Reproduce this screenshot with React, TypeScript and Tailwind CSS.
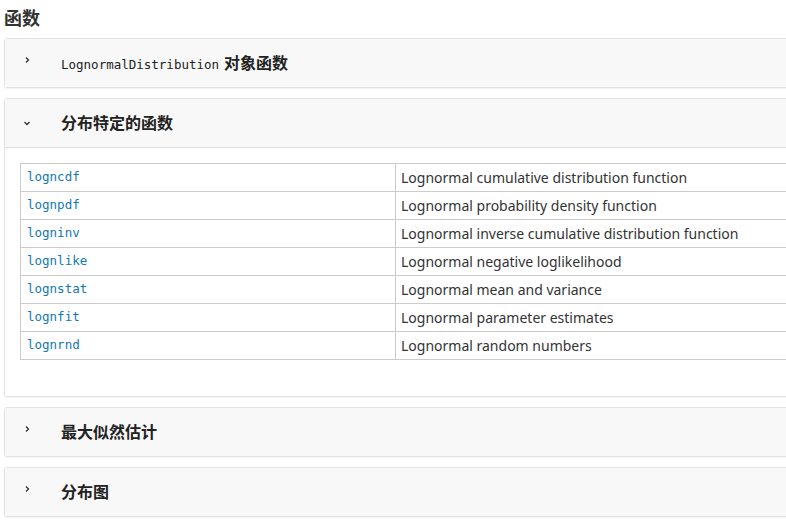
import { FC } from "react";

const rows: [string, string][] = [
    ["logncdf", "Lognormal cumulative distribution function"],
    ["lognpdf", "Lognormal probability density function"],
    ["logninv", "Lognormal inverse cumulative distribution function"],
    ["lognlike", "Lognormal negative loglikelihood"],
    ["lognstat", "Lognormal mean and variance"],
    ["lognfit", "Lognormal parameter estimates"],
    ["lognrnd", "Lognormal random numbers"],
];

const cjk = "font-['Noto_Sans','Noto_Sans_CJK_SC',sans-serif]";
const mono = "font-['DejaVu_Sans_Mono',monospace]";

const Chevron: FC<{ open?: boolean }> = ({ open }) => (
    <svg width="10" height="10" viewBox="0 0 10 10" className={open ? "mt-[0px]" : "-mt-[7px]"}>
        {open ? (
            <path d="M2.5 4 L5 6.5 L7.5 4" fill="none" stroke="#333" strokeWidth="1.3" />
        ) : (
            <path d="M4 2.5 L6.5 5 L4 7.5" fill="none" stroke="#333" strokeWidth="1.3" />
        )}
    </svg>
);

const PanelHeader: FC<{ open?: boolean; children: React.ReactNode }> = ({ open, children }) => (
    <div className="flex items-center h-[48px] pl-[17px] bg-[#f8f8f8]">
        <div className="w-[39px] flex">
            <Chevron open={open} />
        </div>
        <div className={`text-[16px] font-bold text-[#222] ${cjk}`}>{children}</div>
    </div>
);

const App: FC = () => {
    return (
        <div className="w-[786px] h-[522px] overflow-hidden bg-white pl-[4px] pt-[4px]">
            <h2 className={`text-[18px] font-bold text-[#333] leading-[28px] ${cjk}`}>函数</h2>
            <div className="w-[820px] flex flex-col gap-[10px] mt-[6px]">
                <div className="border border-[#e3e3e3] rounded-[3px] overflow-hidden shadow-[0_1px_1px_rgba(0,0,0,0.05)]">
                    <PanelHeader>
                        <span className={`${mono} text-[12.5px] font-normal mr-[5px]`}>LognormalDistribution</span>
                        对象函数
                    </PanelHeader>
                </div>
                <div className="border border-[#e3e3e3] rounded-[3px] overflow-hidden shadow-[0_1px_1px_rgba(0,0,0,0.05)]">
                    <PanelHeader open>分布特定的函数</PanelHeader>
                    <div className="border-t border-[#dcdcdc] bg-white pt-[15px] pb-[36px] pl-[15px]">
                        <table className="border-collapse w-[790px]">
                            <tbody>
                                {rows.map(([fn, desc]) => (
                                    <tr key={fn} className="h-[28px]">
                                        <td className={`w-[375px] border border-[#cccccc] px-[6px] ${mono} text-[12.5px] text-[#1179ad]`}>
                                            {fn}
                                        </td>
                                        <td className="border border-[#cccccc] px-[5px] font-['Noto_Sans',sans-serif] text-[14px] text-[#333]">
                                            {desc}
                                        </td>
                                    </tr>
                                ))}
                            </tbody>
                        </table>
                    </div>
                </div>
                <div className="border border-[#e3e3e3] rounded-[3px] overflow-hidden shadow-[0_1px_1px_rgba(0,0,0,0.05)]">
                    <PanelHeader>最大似然估计</PanelHeader>
                </div>
                <div className="border border-[#e3e3e3] rounded-[3px] overflow-hidden shadow-[0_1px_1px_rgba(0,0,0,0.05)]">
                    <PanelHeader>分布图</PanelHeader>
                </div>
            </div>
        </div>
    );
};

export default App;
